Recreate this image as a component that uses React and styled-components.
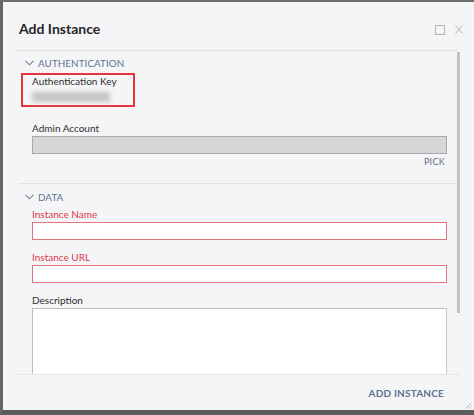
import React from 'react';
import styled, { createGlobalStyle } from 'styled-components';

const GlobalStyle = createGlobalStyle`
    html, body {
        margin: 0;
        padding: 0;
        background: #f0f0f2;
    }
    * {
        box-sizing: border-box;
    }
`

const Frame = styled.div`
    width: 474px;
    height: 415px;
    border-top: 2px solid #6e6e6e;
    border-left: 3px solid #666;
    border-bottom: 5px solid #5c5c5c;
    background: #f5f5f7;
    display: flex;
    flex-direction: column;
    font-family: Lato, "Open Sans", sans-serif;
    position: relative;
`

const Header = styled.div`
    height: 48px;
    padding: 5px 11px 0 16px;
    display: flex;
    align-items: center;
    justify-content: space-between;
`

const Title = styled.h2`
    margin: 0;
    font-size: 14px;
    font-weight: 700;
    color: #262626;
`

const Controls = styled.div`
    display: flex;
    align-items: center;
    gap: 10px;
    margin-top: 2px;
`

const Rule = styled.div`
    height: 1px;
    flex-shrink: 0;
    margin: ${props => props.top || '0'} ${props => props.right || '17px'} 0 ${props => props.left || '13px'};
    background: #e2e2e5;
`

const Body = styled.div`
    height: 323px;
    flex-shrink: 0;
    margin-left: 13px;
    display: flex;
    align-items: flex-start;
    overflow: hidden;
`

const Content = styled.div`
    width: 441px;
    display: flex;
    flex-direction: column;
`

const ScrollTrack = styled.div`
    width: 3px;
    padding-top: 1px;
`

const ScrollThumb = styled.div`
    height: 261px;
    background: #c3c3c5;
`

const SectionHeader = styled.div`
    height: 19px;
    margin-top: ${props => props.top || '3px'};
    padding: 0 0 1px 9px;
    display: flex;
    align-items: center;
    gap: 4px;
    font-size: 9.8px;
    letter-spacing: 0.1px;
    color: #5b7396;
    text-transform: uppercase;
`

const KeyBox = styled.div`
    margin-left: 5px;
    width: 114px;
    height: 34px;
    border: 2px solid #e0363c;
    padding-left: 9px;
`

const Label = styled.div`
    font-size: 10px;
    line-height: 12px;
    padding-bottom: 2px;
    color: ${props => props.required ? '#d73a4a' : '#2e2e2e'};
    margin-top: ${props => props.gap || '0'};
`

const Field = styled.div`
    padding: 0 10px 0 16px;
    display: flex;
    flex-direction: column;
`

const Blurred = styled.div`
    margin-top: 3px;
    width: 78px;
    height: 10px;
    background: #c6c6c8;
    filter: blur(2px);
`

const Input = styled.div`
    height: 18px;
    background: ${props => props.disabled ? '#d6d6d8' : '#fff'};
    border: 1px solid ${props => props.required ? '#e07481' : '#a9a9ab'};
`

const TextArea = styled.div`
    height: 70px;
    background: #fff;
    border: 1px solid #bdbdbf;
    border-right-color: #c9c9cb;
`

const Pick = styled.div`
    margin: 2px 2px 0 0;
    align-self: flex-end;
    font-size: 9px;
    line-height: 12px;
    letter-spacing: 0.3px;
    color: #5f6f84;
`

const Footer = styled.div`
    height: 36px;
    margin: 0 14px 0 13px;
    border-top: 1px solid #e6e6e9;
    display: flex;
    align-items: center;
    justify-content: flex-end;
    padding-right: 16px;
`

const ActionButton = styled.button`
    border: 0;
    background: none;
    padding: 0;
    font-family: inherit;
    font-size: 10px;
    font-weight: 700;
    letter-spacing: 0.2px;
    color: #5a7294;
    cursor: pointer;
`

const Grip = styled.svg`
    position: absolute;
    right: 2px;
    bottom: 1px;
`

const Chevron = () => (
    <svg width="9" height="6" viewBox="0 0 9 6">
        <path d="M0.5 0.8 L4.5 4.8 L8.5 0.8" fill="none" stroke="#6d7f98" strokeWidth="1.1" />
    </svg>
)

const Section = ({ title, top, children }) => (
    <>
        <SectionHeader top={top}>
            <Chevron />
            {title}
        </SectionHeader>
        {children}
    </>
)

const App = () => (
    <>
        <GlobalStyle />
        <Frame>
            <Header>
                <Title>Add Instance</Title>
                <Controls>
                    <svg width="10" height="10" viewBox="0 0 10 10">
                        <rect x="0.5" y="0.5" width="9" height="9" fill="none" stroke="#b4b4b6" strokeWidth="1" />
                    </svg>
                    <svg width="8" height="9" viewBox="0 0 8 9">
                        <path d="M0.5 0.5 L7.5 8.5 M7.5 0.5 L0.5 8.5" stroke="#b4b4b6" strokeWidth="1" />
                    </svg>
                </Controls>
            </Header>
            <Rule />
            <Body>
                <Content>
                    <Section title="Authentication">
                        <KeyBox>
                            <Label>Authentication Key</Label>
                            <Blurred />
                        </KeyBox>
                        <Field>
                            <Label gap="15px">Admin Account</Label>
                            <Input disabled />
                            <Pick>PICK</Pick>
                        </Field>
                    </Section>
                    <Rule top="15px" left="2px" right="1px" />
                    <Section title="Data" top="4px">
                        <Field>
                            <Label required gap="1px">Instance Name</Label>
                            <Input required />
                            <Label required gap="11px">Instance URL</Label>
                            <Input required />
                            <Label gap="11px">Description</Label>
                            <TextArea />
                        </Field>
                    </Section>
                </Content>
                <ScrollTrack>
                    <ScrollThumb />
                </ScrollTrack>
            </Body>
            <Footer>
                <ActionButton>ADD INSTANCE</ActionButton>
            </Footer>
            <Grip width="7" height="7" viewBox="0 0 7 7">
                <path d="M6.5 0.5 L0.5 6.5 M6.5 3.5 L3.5 6.5" stroke="#b0b0b0" strokeWidth="0.8" />
            </Grip>
        </Frame>
    </>
);

export default App;
